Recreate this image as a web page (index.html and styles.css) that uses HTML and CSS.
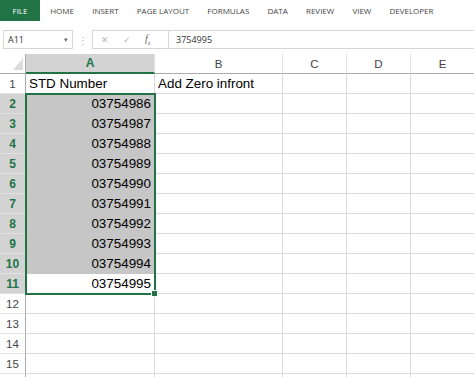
FILE: index.html
```html
<!DOCTYPE html>
<html>
<head>
<meta charset="utf-8">
<link rel="stylesheet" href="styles.css">
</head>
<body>
<div class="ribbon">
  <div class="tab file">FILE</div>
  <div class="tab">HOME</div>
  <div class="tab">INSERT</div>
  <div class="tab">PAGE LAYOUT</div>
  <div class="tab">FORMULAS</div>
  <div class="tab">DATA</div>
  <div class="tab">REVIEW</div>
  <div class="tab">VIEW</div>
  <div class="tab">DEVELOPER</div>
</div>
<div class="fbar">
  <div class="namebox"><span>A11</span><span class="arrow">&#9662;</span></div>
  <div class="dots">&#8942;</div>
  <div class="formula">
    <div class="icons">
      <span class="ico x">&#10005;</span>
      <span class="ico check">&#10003;</span>
      <span class="ico fx"><i>f</i><sub>x</sub></span>
    </div>
    <div class="input">3754995</div>
  </div>
</div>
<div class="sheet">
  <div class="c corner"><span class="tri"></span></div>
  <div class="c ch sel">A</div><div class="c ch">B</div><div class="c ch">C</div><div class="c ch">D</div><div class="c ch">E</div>

  <div class="c rh">1</div><div class="c">STD Number</div><div class="c">Add Zero infront</div><div class="c"></div><div class="c"></div><div class="c"></div>
  <div class="c rh sel">2</div><div class="c num g">03754986</div><div class="c"></div><div class="c"></div><div class="c"></div><div class="c"></div>
  <div class="c rh sel">3</div><div class="c num g">03754987</div><div class="c"></div><div class="c"></div><div class="c"></div><div class="c"></div>
  <div class="c rh sel">4</div><div class="c num g">03754988</div><div class="c"></div><div class="c"></div><div class="c"></div><div class="c"></div>
  <div class="c rh sel">5</div><div class="c num g">03754989</div><div class="c"></div><div class="c"></div><div class="c"></div><div class="c"></div>
  <div class="c rh sel">6</div><div class="c num g">03754990</div><div class="c"></div><div class="c"></div><div class="c"></div><div class="c"></div>
  <div class="c rh sel">7</div><div class="c num g">03754991</div><div class="c"></div><div class="c"></div><div class="c"></div><div class="c"></div>
  <div class="c rh sel">8</div><div class="c num g">03754992</div><div class="c"></div><div class="c"></div><div class="c"></div><div class="c"></div>
  <div class="c rh sel">9</div><div class="c num g">03754993</div><div class="c"></div><div class="c"></div><div class="c"></div><div class="c"></div>
  <div class="c rh sel">10</div><div class="c num g">03754994</div><div class="c"></div><div class="c"></div><div class="c"></div><div class="c"></div>
  <div class="c rh sel">11</div><div class="c num">03754995</div><div class="c"></div><div class="c"></div><div class="c"></div><div class="c"></div>
  <div class="c rh">12</div><div class="c"></div><div class="c"></div><div class="c"></div><div class="c"></div><div class="c"></div>
  <div class="c rh">13</div><div class="c"></div><div class="c"></div><div class="c"></div><div class="c"></div><div class="c"></div>
  <div class="c rh">14</div><div class="c"></div><div class="c"></div><div class="c"></div><div class="c"></div><div class="c"></div>
  <div class="c rh">15</div><div class="c"></div><div class="c"></div><div class="c"></div><div class="c"></div><div class="c"></div>
  <div class="c rh"></div><div class="c"></div><div class="c"></div><div class="c"></div><div class="c"></div><div class="c"></div>

  <div class="selection"><span class="handle"></span></div>
</div>
</body>
</html>
```
FILE: styles.css
```css
html, body {
  margin: 0;
  padding: 0;
  background: #ffffff;
  overflow: hidden;
  width: 474px;
  height: 377px;
}
body {
  font-family: "Liberation Sans", Arial, sans-serif;
  color: #222;
}
.ribbon {
  display: flex;
  align-items: center;
  height: 21px;
  gap: 18.2px;
  font-family: "Open Sans", "Liberation Sans", sans-serif;
  font-size: 8px;
  color: #444;
}
.tab {
  line-height: 21px;
  white-space: nowrap;
}
.tab.file {
  background: #217346;
  color: #fff;
  width: 40px;
  height: 21px;
  text-align: center;
  margin-right: -8px;
}
.fbar {
  display: flex;
  align-items: center;
  margin-top: 9px;
  height: 19px;
  font-family: "Open Sans", "Liberation Sans", sans-serif;
  font-size: 9px;
  color: #333;
}
.namebox {
  box-sizing: border-box;
  margin-left: 3px;
  width: 70px;
  height: 19px;
  border: 1px solid #d6d6d6;
  display: flex;
  align-items: center;
  justify-content: space-between;
  padding: 0 4px 0 4px;
}
.arrow {
  font-size: 7px;
  color: #666;
}
.dots {
  width: 19px;
  text-align: center;
  color: #b0b0b0;
  font-size: 10px;
}
.formula {
  flex: 1;
  height: 19px;
  box-sizing: border-box;
  border: 1px solid #d6d6d6;
  border-right: none;
  display: flex;
}
.icons {
  width: 76px;
  display: flex;
  align-items: center;
  padding-left: 8px;
  gap: 14px;
  box-sizing: border-box;
  border-right: 1px solid #d6d6d6;
}
.ico {
  color: #b4b4b4;
  font-size: 9px;
}
.ico.fx {
  color: #666;
  font-family: "Liberation Serif", serif;
  font-size: 10px;
}
.ico.fx sub {
  font-size: 6px;
  font-style: italic;
}
.input {
  padding-left: 7px;
  line-height: 17px;
}
.sheet {
  position: relative;
  margin-top: 5px;
  display: grid;
  grid-template-columns: 26px 129px 128px 64px 64px 64px;
  grid-auto-rows: 20px;
  font-size: 13.4px;
}
.c {
  box-sizing: border-box;
  border-right: 1px solid #dadada;
  border-bottom: 1px solid #dadada;
  display: flex;
  align-items: center;
  padding: 0 3px;
  white-space: nowrap;
  overflow: visible;
  color: #000;
}
.c.num {
  justify-content: flex-end;
}
.c.g {
  background: #c6c6c6;
  border-bottom-color: #c6c6c6;
  border-right-color: #c6c6c6;
}
.corner {
  position: relative;
  border-right-color: #ababab;
  border-bottom-color: #ababab;
}
.tri {
  position: absolute;
  right: 2px;
  bottom: 3px;
  width: 0;
  height: 0;
  border-left: 10px solid transparent;
  border-bottom: 12px solid #dcdcdc;
}
.ch {
  justify-content: center;
  font-size: 11.5px;
  color: #444;
  border-bottom-color: #ababab;
  border-right-color: #e2e2e2;
}
.ch.sel {
  background: #d3d3d3;
  color: #217346;
  font-weight: bold;
  font-size: 12px;
  border-bottom: 2px solid #217346;
}
.rh {
  justify-content: center;
  padding: 0;
  font-size: 11.5px;
  color: #444;
  border-right-color: #ababab;
  border-bottom-color: #e2e2e2;
}
.rh.sel {
  background: #d3d3d3;
  color: #217346;
  font-weight: bold;
  font-size: 12px;
  border-bottom-color: #e2e2e2;
}
.selection {
  position: absolute;
  left: 25px;
  top: 39px;
  width: 131px;
  height: 202px;
  box-sizing: border-box;
  border: 2px solid #217346;
  pointer-events: none;
}
.handle {
  position: absolute;
  right: -4px;
  bottom: -4px;
  width: 5px;
  height: 5px;
  background: #217346;
  border: 1px solid #fff;
}
```
